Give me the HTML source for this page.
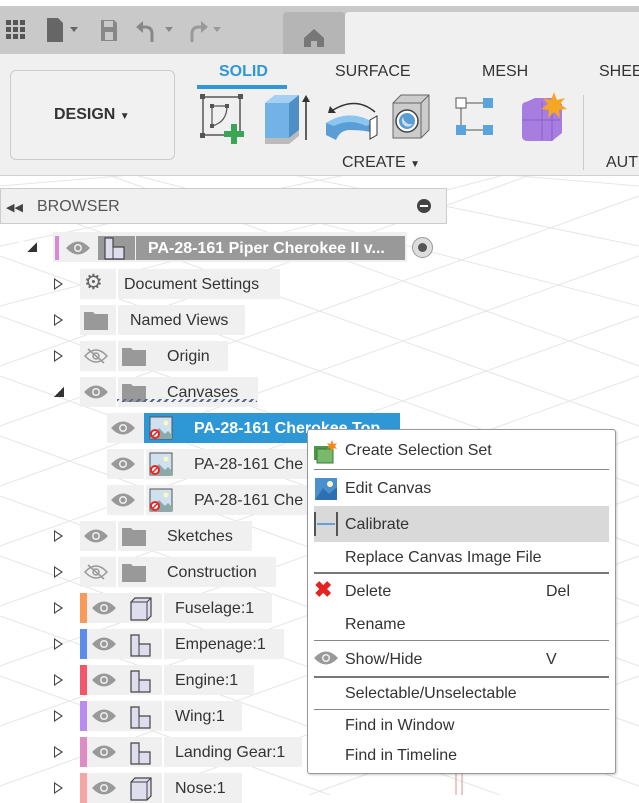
<!DOCTYPE html>
<html><head><meta charset="utf-8">
<style>
*{margin:0;padding:0;box-sizing:border-box}
body{width:639px;height:795px;overflow:hidden;position:relative;background:#fff;font-family:"Liberation Sans",sans-serif;color:#333}
.a{position:absolute}
.t{position:absolute;font-size:16px;white-space:nowrap;line-height:20px;margin-top:1px}
.bx{position:absolute;background:#f0f0f0;height:30px}
.tri{position:absolute;width:0;height:0;border-top:6px solid transparent;border-bottom:6px solid transparent;border-left:9px solid #444}
.tri::after{content:"";position:absolute;left:-8px;top:-4px;border-top:4px solid transparent;border-bottom:4px solid transparent;border-left:6px solid #fff}
.sep{position:absolute;left:314px;width:295px;height:1px;background:#888}
.sep2{height:2px;background:#777}
.mi{position:absolute;left:345px;font-size:16px;color:#333;line-height:20px;margin-top:1px}
</style></head><body>
<svg class="a" style="left:0;top:176px" width="639" height="619">
<g stroke="#e6e6e6" stroke-width="1">
<path d="M0 20 L639 250 M0 80 L639 310 M0 140 L639 370 M0 200 L639 430 M0 260 L639 490 M0 320 L639 550 M0 380 L639 610 M0 440 L500 619 M0 500 L330 619 M0 -40 L639 190 M100 -10 L639 130 M250 -10 L639 70 M400 -10 L639 10"/>
<path d="M639 20 L0 250 M639 80 L0 310 M639 140 L0 370 M639 200 L0 430 M639 260 L0 490 M639 320 L0 550 M639 380 L0 610 M639 440 L139 619 M639 500 L309 619 M639 -40 L0 190 M539 -10 L0 130 M389 -10 L0 70 M239 -10 L0 10"/>
</g>
<path d="M456 580 V619 M462 580 V619" stroke="#e88" stroke-width="1"/>
</svg>
<!-- top bar -->
<div class="a" style="left:0;top:6px;width:639px;height:48px;background:#c9c9c9"></div>
<div class="a" style="left:283px;top:12px;width:62px;height:42px;background:#b5b5b5;border-radius:4px 4px 0 0"></div>
<div class="a" style="left:345px;top:12px;width:294px;height:42px;background:#f0f0f0;border-radius:4px 0 0 0"></div>
<svg class="a" style="left:0;top:12px" width="345" height="42">
<g fill="#555"><rect x="6" y="8" width="5" height="5"/><rect x="13" y="8" width="5" height="5"/><rect x="20" y="8" width="5" height="5"/><rect x="6" y="15" width="5" height="5"/><rect x="13" y="15" width="5" height="5"/><rect x="20" y="15" width="5" height="5"/><rect x="6" y="22" width="5" height="5"/><rect x="13" y="22" width="5" height="5"/><rect x="20" y="22" width="5" height="5"/></g>
<path d="M47 6 H58 L63 11 V30 H47 Z" fill="#666"/><path d="M70 15 H78 L74 20Z" fill="#666"/>
<path d="M101 8 H114 L117 11 V29 H101 Z" fill="#888"/><rect x="104" y="9" width="9" height="6" fill="#c9c9c9"/><rect x="105" y="20" width="8" height="8" fill="#c9c9c9"/>
<path d="M152 30 V22 Q152 15 145 15 H142" stroke="#888" stroke-width="3" fill="none"/><path d="M143 9 L136 15 L143 21Z" fill="#888"/><path d="M165 15 H173 L169 20Z" fill="#888"/>
<path d="M192 30 V22 Q192 15 199 15 H202" stroke="#999" stroke-width="3" fill="none"/><path d="M201 9 L208 15 L201 21Z" fill="#999"/><path d="M213 15 H221 L217 20Z" fill="#999"/>
<path d="M304 26 L314 17 L324 26 V35 H317 V29 H311 V35 H304Z" fill="#777"/>
</svg>
<!-- toolbar -->
<div class="a" style="left:0;top:54px;width:639px;height:122px;background:#f0f0f0;border-bottom:1px solid #d0d0d0"></div>
<div class="a" style="left:10px;top:70px;width:165px;height:90px;border:1px solid #ccc;border-radius:6px;background:#f1f1f1"></div>
<div class="t" style="left:54px;top:104px;font-weight:bold;font-size:16px;color:#333">DESIGN <span style="font-size:10px">▼</span></div>
<div class="t" style="left:219px;top:61px;font-size:16px;color:#2f97d6;font-weight:bold">SOLID</div>
<div class="a" style="left:197px;top:85px;width:90px;height:4px;background:#2f97d6"></div>
<div class="t" style="left:335px;top:61px;font-size:16px">SURFACE</div>
<div class="t" style="left:482px;top:61px;font-size:16px">MESH</div>
<div class="t" style="left:599px;top:61px;font-size:16px">SHEE</div>
<div class="t" style="left:342px;top:152px;font-size:16px">CREATE <span style="font-size:10px">▼</span></div>
<div class="t" style="left:606px;top:152px;font-size:16px">AUT</div>
<div class="a" style="left:583px;top:95px;width:1px;height:75px;background:#ccc"></div>
<svg class="a" style="left:190px;top:90px" width="390" height="58">
<path d="M13 7 H50 V43 M48 45 H13 V7" stroke="#555" fill="none" stroke-width="1.5"/>
<g fill="#555"><rect x="10" y="4" width="5" height="5"/><rect x="48" y="4" width="5" height="5"/><rect x="10" y="43" width="5" height="5"/><rect x="20" y="14" width="4" height="4"/><rect x="35" y="14" width="4" height="4"/><rect x="20" y="34" width="4" height="4"/></g>
<path d="M22 16 V36 M22 16 H37 M37 16 Q37 32 22 36" stroke="#555" fill="none" stroke-width="1.2"/>
<path d="M41 34 H47 V41 H54 V47 H47 V54 H41 V47 H34 V41 H41Z" fill="#3aa655"/>
<path d="M75 13 L85 5 H109 V40 L99 48 H75 Z" fill="#73b2e6"/><path d="M99 13 L109 5 V40 L99 48Z" fill="#4e8fc8"/><path d="M75 13 L85 5 H109 L99 13Z" fill="#a3d0f5"/>
<path d="M75 48 H99 L109 40 V46 L99 54 H75Z" fill="#bbb"/><path d="M116 50 V8" stroke="#333" stroke-width="1.5"/><path d="M112 12 L116 5 L120 12Z" fill="#333"/>
<path d="M140 22 Q165 5 185 22" stroke="#333" fill="none" stroke-width="1.5"/><path d="M140 16 L138 23 L146 23Z" fill="#333"/>
<path d="M136 33 Q160 18 184 33 V43 Q175 40 160 40 Q150 40 146 50 L136 45Z" fill="#5b9ed6"/><path d="M136 33 Q160 18 184 33 L176 36 Q160 28 144 36Z" fill="#8cc5f0"/><path d="M180 30 L187 26 V45 L180 49Z" fill="#fff" stroke="#333"/>
<path d="M203 13 L211 5 H239 V40 L231 48 H203Z" fill="#ccc" stroke="#666"/><path d="M203 13 H231 V48 M231 13 L239 5" stroke="#666" fill="none"/><circle cx="217" cy="31" r="11" fill="#fff" stroke="#444" stroke-width="1.5"/><circle cx="217" cy="31" r="8" fill="#5b9ed6"/><path d="M213 27 A6 6 0 0 0 223 34 A8 8 0 0 1 213 27Z" fill="#cde"/>
<rect x="266" y="8" width="10" height="10" fill="#fff" stroke="#555"/><rect x="293" y="8" width="10" height="10" fill="#5aa4de"/><rect x="266" y="35" width="10" height="10" fill="#5aa4de"/><rect x="293" y="35" width="10" height="10" fill="#5aa4de"/><path d="M276 13 H293 M271 18 V35 M276 40 H293" stroke="#555"/>
<path d="M336 12 Q332 12 332 17 V46 Q332 51 338 51 H362 L372 43 V14 L363 8 H345Z" fill="#a77ee0"/><path d="M332 30 H370 M352 12 V50" stroke="#8a5fcc"/><path d="M362 24 V51" stroke="#8a5fcc"/>
<path d="M364 2 L367 10 L375 8 L370 14 L377 19 L369 20 L370 28 L364 22 L358 28 L359 20 L351 19 L358 14 L353 8 L361 10Z" fill="#f5a623"/>
</svg>
<!-- browser header -->
<div class="a" style="left:0;top:188px;width:447px;height:36px;background:#f0f0f0;border:1px solid #ccc"></div>
<div class="t" style="left:6px;top:197px;font-size:11px;color:#444">◀◀</div>
<div class="t" style="left:37px;top:196px;font-size:16px;color:#555">BROWSER</div>
<div class="a" style="left:417px;top:199px;width:14px;height:14px;border-radius:7px;background:#444"><div class="a" style="left:3px;top:6px;width:8px;height:2px;background:#fff"></div></div>
<svg width="0" height="0" style="position:absolute"><defs>
<symbol id="eye" viewBox="0 0 24 14"><path d="M0 7 Q12 -6 24 7 Q12 20 0 7Z" fill="#999"/><circle cx="12" cy="7" r="4" fill="#f0f0f0"/><circle cx="12" cy="7" r="2.5" fill="#999"/></symbol>
<symbol id="eyex" viewBox="0 0 24 16"><path d="M1 8 Q12 -4 23 8 Q12 20 1 8Z" fill="none" stroke="#999" stroke-width="1.5"/><circle cx="12" cy="8" r="3" fill="none" stroke="#999" stroke-width="1.5"/><path d="M4 1 L20 15" stroke="#999" stroke-width="1.5"/></symbol>
<symbol id="fold" viewBox="0 0 24 20"><path d="M0 2 H9 L11 4 H24 V20 H0Z" fill="#999"/></symbol>
<symbol id="comp" viewBox="0 0 22 24"><path d="M1 2 H9 V11 H20 V23 H1Z" fill="#dde" stroke="#444" stroke-width="1.2"/><path d="M9 11 V23" stroke="#444"/></symbol>
<symbol id="body" viewBox="0 0 22 24"><path d="M1 5 L5 1 H21 V19 L17 23 H1Z" fill="#dde" stroke="#444" stroke-width="1.2"/><path d="M1 5 H17 V23 M17 5 L21 1" stroke="#444" fill="none"/></symbol>
<symbol id="img" viewBox="0 0 24 24"><rect x="1" y="1" width="22" height="22" fill="#cfe0ee" stroke="#555"/><path d="M1 23 L10 12 L16 18 L19 15 L23 19 V23Z" fill="#8aa"/><circle cx="17" cy="7" r="2.5" fill="#fff7c0"/><circle cx="6" cy="18" r="5" fill="#e22"/><circle cx="6" cy="18" r="3" fill="#fff"/><path d="M3 21 L9 15" stroke="#e22" stroke-width="1.5"/></symbol>
</defs></svg>
<!-- root row -->
<div class="tri" style="left:27px;top:242px;border:none;width:10px;height:10px;background:linear-gradient(135deg,transparent 50%,#333 50%)"></div>
<div class="bx" style="left:53px;top:232px;width:354px;background:#f0f0f0"></div>
<div class="a" style="left:55px;top:236px;width:4px;height:24px;background:#d888d8"></div>
<svg class="a" style="left:66px;top:241px" width="24" height="14"><use href="#eye"/></svg>
<div class="a" style="left:98px;top:236px;width:37px;height:24px;background:#999"></div>
<svg class="a" style="left:104px;top:236px" width="22" height="24"><use href="#comp"/></svg>
<div class="a" style="left:136px;top:236px;width:269px;height:24px;background:#999"></div>
<div class="t" style="left:148px;top:238px;color:#fff;font-weight:bold">PA-28-161 Piper Cherokee II v...</div>
<div class="a" style="left:412px;top:237px;width:21px;height:21px;border-radius:11px;background:#ddd;border:1px solid #999"><div class="a" style="left:5px;top:5px;width:9px;height:9px;border-radius:5px;background:#555"></div></div>
<!-- level rows -->
<div class="tri" style="left:54px;top:278px"></div>
<div class="bx" style="left:80px;top:269px;width:200px"></div><div class="a" style="left:116px;top:269px;width:2px;height:30px;background:#fff"></div>
<div class="t" style="left:84px;top:272px;font-size:21px;color:#666">⚙</div>
<div class="t" style="left:124px;top:274px">Document Settings</div>
<div class="tri" style="left:54px;top:314px"></div>
<div class="bx" style="left:80px;top:305px;width:165px"></div><div class="a" style="left:116px;top:305px;width:2px;height:30px;background:#fff"></div>
<svg class="a" style="left:84px;top:310px" width="24" height="20"><use href="#fold"/></svg>
<div class="t" style="left:130px;top:310px">Named Views</div>
<div class="tri" style="left:54px;top:350px"></div>
<div class="bx" style="left:80px;top:341px;width:148px"></div><div class="a" style="left:116px;top:341px;width:2px;height:30px;background:#fff"></div>
<svg class="a" style="left:84px;top:348px" width="24" height="16"><use href="#eyex"/></svg>
<svg class="a" style="left:122px;top:346px" width="24" height="20"><use href="#fold"/></svg>
<div class="t" style="left:167px;top:346px">Origin</div>
<div class="a" style="left:54px;top:387px;width:10px;height:10px;background:linear-gradient(135deg,transparent 50%,#333 50%)"></div>
<div class="bx" style="left:80px;top:377px;width:178px"></div><div class="a" style="left:116px;top:377px;width:2px;height:30px;background:#fff"></div>
<svg class="a" style="left:84px;top:385px" width="24" height="14"><use href="#eye"/></svg>
<svg class="a" style="left:122px;top:382px" width="24" height="20"><use href="#fold"/></svg>
<div class="t" style="left:167px;top:382px">Canvases</div>
<div class="a" style="left:117px;top:399px;width:140px;height:3px;background:repeating-linear-gradient(135deg,#568 0 2px,transparent 2px 5px)"></div>
<!-- canvas rows -->
<div class="bx" style="left:107px;top:413px;width:37px"></div>
<svg class="a" style="left:111px;top:421px" width="24" height="14"><use href="#eye"/></svg>
<div class="a" style="left:144px;top:413px;width:256px;height:30px;background:#2e97d6"></div>
<svg class="a" style="left:149px;top:416px" width="24" height="24"><use href="#img"/></svg>
<div class="t" style="left:194px;top:418px;color:#fff;font-weight:bold">PA-28-161 Cherokee Top</div>
<div class="bx" style="left:107px;top:449px;width:200px"></div><div class="a" style="left:144px;top:449px;width:2px;height:30px;background:#fff"></div>
<svg class="a" style="left:111px;top:457px" width="24" height="14"><use href="#eye"/></svg>
<svg class="a" style="left:149px;top:452px" width="24" height="24"><use href="#img"/></svg>
<div class="t" style="left:194px;top:454px">PA-28-161 Che</div>
<div class="bx" style="left:107px;top:485px;width:200px"></div><div class="a" style="left:144px;top:485px;width:2px;height:30px;background:#fff"></div>
<svg class="a" style="left:111px;top:493px" width="24" height="14"><use href="#eye"/></svg>
<svg class="a" style="left:149px;top:488px" width="24" height="24"><use href="#img"/></svg>
<div class="t" style="left:194px;top:490px">PA-28-161 Che</div>
<!-- more rows -->
<div class="tri" style="left:54px;top:530px"></div>
<div class="bx" style="left:80px;top:521px;width:172px"></div><div class="a" style="left:116px;top:521px;width:2px;height:30px;background:#fff"></div>
<svg class="a" style="left:84px;top:529px" width="24" height="14"><use href="#eye"/></svg>
<svg class="a" style="left:122px;top:526px" width="24" height="20"><use href="#fold"/></svg>
<div class="t" style="left:167px;top:526px">Sketches</div>
<div class="tri" style="left:54px;top:566px"></div>
<div class="bx" style="left:80px;top:557px;width:196px"></div><div class="a" style="left:116px;top:557px;width:2px;height:30px;background:#fff"></div>
<svg class="a" style="left:84px;top:564px" width="24" height="16"><use href="#eyex"/></svg>
<svg class="a" style="left:122px;top:562px" width="24" height="20"><use href="#fold"/></svg>
<div class="t" style="left:167px;top:562px">Construction</div>

<div class="tri" style="left:54px;top:602px"></div>
<div class="bx" style="left:80px;top:593px;width:192px"></div><div class="a" style="left:80px;top:593px;width:7px;height:30px;background:#f79a5a"></div><div class="a" style="left:162px;top:593px;width:2px;height:30px;background:#fff"></div>
<svg class="a" style="left:92px;top:601px" width="24" height="14"><use href="#eye"/></svg><svg class="a" style="left:130px;top:597px" width="22" height="24"><use href="#body"/></svg>
<div class="t" style="left:175px;top:598px">Fuselage:1</div>
<div class="tri" style="left:54px;top:638px"></div>
<div class="bx" style="left:80px;top:629px;width:204px"></div><div class="a" style="left:80px;top:629px;width:7px;height:30px;background:#5a8cea"></div><div class="a" style="left:162px;top:629px;width:2px;height:30px;background:#fff"></div>
<svg class="a" style="left:92px;top:637px" width="24" height="14"><use href="#eye"/></svg><svg class="a" style="left:130px;top:633px" width="22" height="24"><use href="#comp"/></svg>
<div class="t" style="left:175px;top:634px">Empenage:1</div>
<div class="tri" style="left:54px;top:674px"></div>
<div class="bx" style="left:80px;top:665px;width:174px"></div><div class="a" style="left:80px;top:665px;width:7px;height:30px;background:#f2566a"></div><div class="a" style="left:162px;top:665px;width:2px;height:30px;background:#fff"></div>
<svg class="a" style="left:92px;top:673px" width="24" height="14"><use href="#eye"/></svg><svg class="a" style="left:130px;top:669px" width="22" height="24"><use href="#comp"/></svg>
<div class="t" style="left:175px;top:670px">Engine:1</div>
<div class="tri" style="left:54px;top:710px"></div>
<div class="bx" style="left:80px;top:701px;width:162px"></div><div class="a" style="left:80px;top:701px;width:7px;height:30px;background:#b98cf2"></div><div class="a" style="left:162px;top:701px;width:2px;height:30px;background:#fff"></div>
<svg class="a" style="left:92px;top:709px" width="24" height="14"><use href="#eye"/></svg><svg class="a" style="left:130px;top:705px" width="22" height="24"><use href="#comp"/></svg>
<div class="t" style="left:175px;top:706px">Wing:1</div>
<div class="tri" style="left:54px;top:746px"></div>
<div class="bx" style="left:80px;top:737px;width:222px"></div><div class="a" style="left:80px;top:737px;width:7px;height:30px;background:#e08cc4"></div><div class="a" style="left:162px;top:737px;width:2px;height:30px;background:#fff"></div>
<svg class="a" style="left:92px;top:745px" width="24" height="14"><use href="#eye"/></svg><svg class="a" style="left:130px;top:741px" width="22" height="24"><use href="#comp"/></svg>
<div class="t" style="left:175px;top:742px">Landing Gear:1</div>
<div class="tri" style="left:54px;top:782px"></div>
<div class="bx" style="left:80px;top:773px;width:162px"></div><div class="a" style="left:80px;top:773px;width:7px;height:30px;background:#f6a6a6"></div><div class="a" style="left:162px;top:773px;width:2px;height:30px;background:#fff"></div>
<svg class="a" style="left:92px;top:781px" width="24" height="14"><use href="#eye"/></svg><svg class="a" style="left:130px;top:777px" width="22" height="24"><use href="#body"/></svg>
<div class="t" style="left:175px;top:778px">Nose:1</div>
<!-- context menu -->
<div class="a" style="left:307px;top:429px;width:309px;height:345px;background:#fff;border:1px solid #999;border-radius:3px;box-shadow:1px 1px 2px rgba(0,0,0,.2)"></div>
<svg class="a" style="left:313px;top:440px" width="24" height="24"><rect x="1" y="6" width="16" height="14" fill="#4a9a4a"/><rect x="4" y="9" width="16" height="14" fill="#7ab86a" stroke="#3a7a3a"/><path d="M19 0 L20.5 4 L24 3 L22 6 L24 9 L20.5 8 L19 12 L17.5 8 L14 9 L16 6 L14 3 L17.5 4Z" fill="#f28a1a"/></svg>
<div class="mi" style="top:440px">Create Selection Set</div>
<div class="sep" style="top:469px"></div>
<svg class="a" style="left:315px;top:478px" width="22" height="22"><rect width="22" height="22" fill="#4a90d0"/><path d="M0 22 L8 10 L14 16 L22 9 V22Z" fill="#2d6fb0"/><circle cx="15" cy="6" r="3" fill="#fff7c0"/></svg>
<div class="mi" style="top:478px">Edit Canvas</div>
<div class="a" style="left:314px;top:506px;width:295px;height:36px;background:#d9d9d9"></div>
<svg class="a" style="left:314px;top:512px" width="24" height="24"><path d="M1 0 V24 M23 0 V24" stroke="#555" stroke-width="2"/><path d="M3 12 H21" stroke="#3a8fd8" stroke-width="1.5"/></svg>
<div class="mi" style="top:514px">Calibrate</div>
<div class="mi" style="top:547px">Replace Canvas Image File</div>
<div class="sep sep2" style="top:572px"></div>
<div class="a" style="left:314px;top:578px;font-size:22px;color:#e52323;font-weight:bold;line-height:24px">✖</div>
<div class="mi" style="top:581px">Delete</div><div class="mi" style="left:546px;top:581px">Del</div>
<div class="mi" style="top:614px">Rename</div>
<div class="sep" style="top:640px"></div>
<svg class="a" style="left:314px;top:651px" width="24" height="14"><use href="#eye"/></svg>
<div class="mi" style="top:649px">Show/Hide</div><div class="mi" style="left:546px;top:649px">V</div>
<div class="sep sep2" style="top:676px"></div>
<div class="mi" style="top:683px">Selectable/Unselectable</div>
<div class="sep" style="top:709px"></div>
<div class="mi" style="top:715px">Find in Window</div>
<div class="mi" style="top:745px">Find in Timeline</div>
</body></html>
